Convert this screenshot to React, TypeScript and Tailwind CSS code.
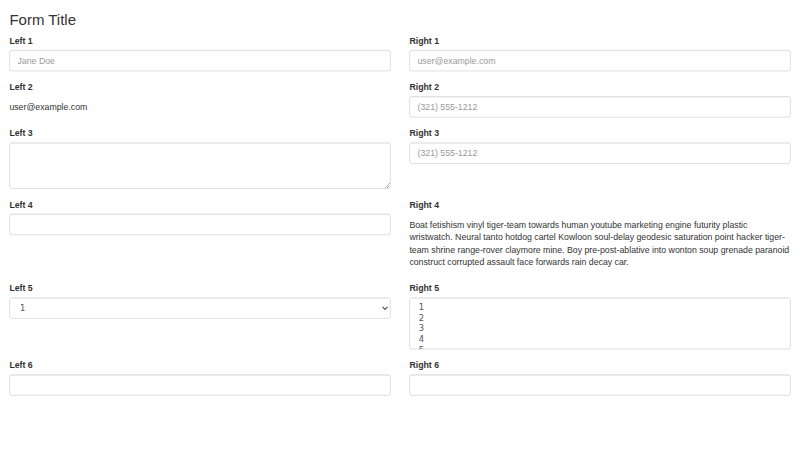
import React from "react";

const inputCls =
  "block w-full h-[34px] px-[12px] py-[6px] bg-white border border-[#ccc] rounded-[4px] shadow-[inset_0_1px_1px_rgba(0,0,0,0.075)] text-[14px] leading-[20px] text-[#555] placeholder:text-[#999] outline-none";

function Group({ label, children }: { label: string; children: React.ReactNode }) {
  return (
    <div className="flex-1 min-w-0 mb-[15px]">
      <label className="inline-block max-w-full font-bold mb-[5px]">{label}</label>
      {children}
    </div>
  );
}

function Row({ children }: { children: React.ReactNode }) {
  return <div className="flex gap-[30px] items-start">{children}</div>;
}

export default function App() {
  return (
    <div className="w-[800px] h-[450px] overflow-hidden bg-white">
      <div className="w-[1280px] h-[720px] origin-top-left scale-[0.625] px-[15px] pt-[19px] font-['Liberation_Sans',Arial,sans-serif] text-[14px] leading-[20px] text-[#333]">
        <h3 className="mb-[10px] text-[24px] leading-[26.4px] font-medium">Form Title</h3>

        <Row>
          <Group label="Left 1">
            <input className={inputCls} placeholder="Jane Doe" />
          </Group>
          <Group label="Right 1">
            <input className={inputCls} placeholder="user@example.com" />
          </Group>
        </Row>

        <Row>
          <Group label="Left 2">
            <p className="min-h-[34px] py-[7px]">user@example.com</p>
          </Group>
          <Group label="Right 2">
            <input className={inputCls} placeholder="(321) 555-1212" />
          </Group>
        </Row>

        <Row>
          <Group label="Left 3">
            <textarea
              rows={3}
              className="block w-full h-[74px] px-[12px] py-[6px] bg-white border border-[#ccc] rounded-[4px] shadow-[inset_0_1px_1px_rgba(0,0,0,0.075)] text-[14px] leading-[20px] text-[#555] outline-none"
            />
          </Group>
          <Group label="Right 3">
            <input className={inputCls} placeholder="(321) 555-1212" />
          </Group>
        </Row>

        <Row>
          <Group label="Left 4">
            <input className={inputCls} />
          </Group>
          <Group label="Right 4">
            <p className="min-h-[34px] py-[7px]">
              Boat fetishism vinyl tiger-team towards human youtube marketing engine futurity plastic wristwatch. Neural
              tanto hotdog cartel Kowloon soul-delay geodesic saturation point hacker tiger-team shrine range-rover
              claymore mine. Boy pre-post-ablative into wonton soup grenade paranoid construct corrupted assault face
              forwards rain decay car.
            </p>
          </Group>
        </Row>

        <Row>
          <Group label="Left 5">
            <select
              defaultValue="1"
              className="block w-full h-[34px] px-[12px] bg-white border border-[#ccc] rounded-[4px] shadow-[inset_0_1px_1px_rgba(0,0,0,0.075)] font-['DejaVu_Sans',sans-serif] text-[13.33px] text-[#555] outline-none"
            >
              <option value="1">1</option>
              <option value="2">2</option>
              <option value="3">3</option>
              <option value="4">4</option>
              <option value="5">5</option>
            </select>
          </Group>
          <Group label="Right 5">
            <div className="h-[83px] overflow-hidden bg-white border border-[#ccc] rounded-[4px] shadow-[inset_0_1px_1px_rgba(0,0,0,0.075)] pt-[6px] pl-[14px] font-['DejaVu_Sans',sans-serif] text-[13.33px] leading-[17px] text-[#555]">
              <div>1</div>
              <div>2</div>
              <div>3</div>
              <div>4</div>
              <div>5</div>
            </div>
          </Group>
        </Row>

        <Row>
          <Group label="Left 6">
            <input className={inputCls} />
          </Group>
          <Group label="Right 6">
            <input className={inputCls} />
          </Group>
        </Row>
      </div>
    </div>
  );
}
